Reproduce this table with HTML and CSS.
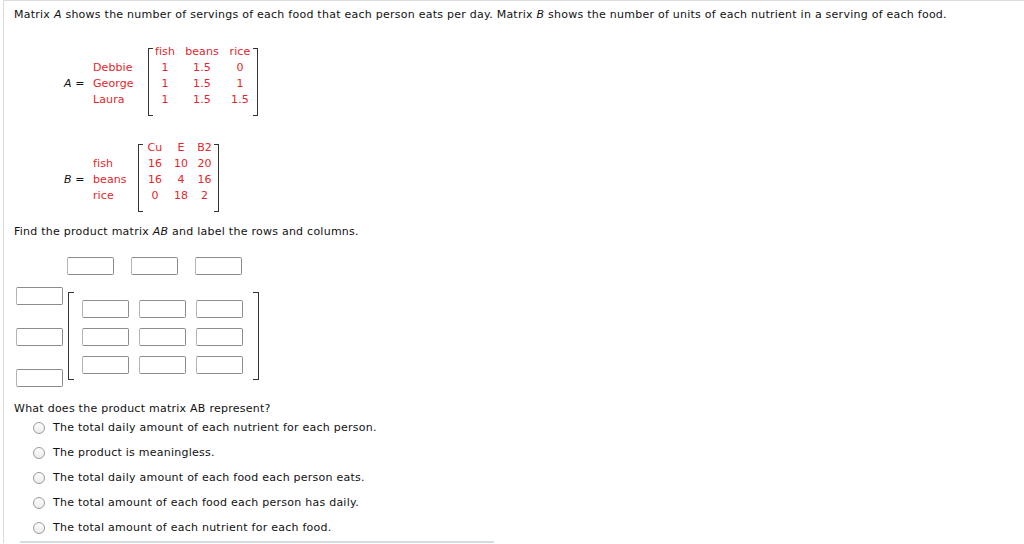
FILE: index.html
```html
<!DOCTYPE html>
<html>
<head>
<meta charset="utf-8">
<link rel="stylesheet" href="styles.css">
</head>
<body>
<div class="page">
  <p class="intro">Matrix <i>A</i> shows the number of servings of each food that each person eats per day. Matrix <i>B</i> shows the number of units of each nutrient in a serving of each food.</p>

  <div class="mat mat-a">
    <div class="eq"><i>A</i> =</div>
    <div class="lbl r1">Debbie</div>
    <div class="lbl r2">George</div>
    <div class="lbl r3">Laura</div>
    <div class="brk brk-l"></div>
    <div class="c c1 r0">fish</div><div class="c c2 r0">beans</div><div class="c c3 r0">rice</div>
    <div class="c c1 r1">1</div><div class="c c2 r1">1.5</div><div class="c c3 r1">0</div>
    <div class="c c1 r2">1</div><div class="c c2 r2">1.5</div><div class="c c3 r2">1</div>
    <div class="c c1 r3">1</div><div class="c c2 r3">1.5</div><div class="c c3 r3">1.5</div>
    <div class="brk brk-r"></div>
  </div>

  <div class="mat mat-b">
    <div class="eq"><i>B</i> =</div>
    <div class="lbl r1">fish</div>
    <div class="lbl r2">beans</div>
    <div class="lbl r3">rice</div>
    <div class="brk brk-l"></div>
    <div class="c c1 r0">Cu</div><div class="c c2 r0">E</div><div class="c c3 r0">B2</div>
    <div class="c c1 r1">16</div><div class="c c2 r1">10</div><div class="c c3 r1">20</div>
    <div class="c c1 r2">16</div><div class="c c2 r2">4</div><div class="c c3 r2">16</div>
    <div class="c c1 r3">0</div><div class="c c2 r3">18</div><div class="c c3 r3">2</div>
    <div class="brk brk-r"></div>
  </div>

  <p class="find">Find the product matrix <i>AB</i> and label the rows and columns.</p>

  <div class="answer">
    <div class="colheads">
      <input class="box" type="text"><input class="box" type="text"><input class="box" type="text">
    </div>
    <div class="answer-body">
      <div class="rowheads">
        <input class="box" type="text"><input class="box" type="text"><input class="box" type="text">
      </div>
      <div class="bigmat">
        <div class="bbrk bbrk-l"></div>
        <div class="cells">
          <input class="box" type="text"><input class="box" type="text"><input class="box" type="text">
          <input class="box" type="text"><input class="box" type="text"><input class="box" type="text">
          <input class="box" type="text"><input class="box" type="text"><input class="box" type="text">
        </div>
        <div class="bbrk bbrk-r"></div>
      </div>
    </div>
  </div>

  <p class="q">What does the product matrix AB represent?</p>
  <ul class="opts">
    <li><span class="radio"></span>The total daily amount of each nutrient for each person.</li>
    <li><span class="radio"></span>The product is meaningless.</li>
    <li><span class="radio"></span>The total daily amount of each food each person eats.</li>
    <li><span class="radio"></span>The total amount of each food each person has daily.</li>
    <li><span class="radio"></span>The total amount of each nutrient for each food.</li>
  </ul>
  <div class="rule"></div>
</div>
</body>
</html>
```

FILE: styles.css
```css
html, body {
  margin: 0;
  padding: 0;
  background: #fff;
}
body {
  font-family: Verdana, "DejaVu Sans", sans-serif;
  font-size: 11px;
  letter-spacing: 0.25px;
  color: #111;
  overflow: hidden;
}
.page {
  margin-left: 3px;
  border-left: 1px solid #dcdcdc;
  border-top: 1px solid #dcdcdc;
  padding: 6px 0 0 10px;
}
p { margin: 0; line-height: 16px; }

.mat {
  display: grid;
  margin-left: 50px;
  grid-template-rows: 16px 16px 16px 16px 8px;
  line-height: 16px;
  letter-spacing: 0.1px;
}
.mat-a {
  margin-top: 21px;
  grid-template-columns: 29px 55px 5px 24px 50px 26px 5px;
}
.mat-b {
  margin-top: 24px;
  grid-template-columns: 29px 45px 5px 24px 28px 19px 5px;
}
.eq { grid-column: 1; grid-row: 3; color: #111; }
.lbl { grid-column: 2; color: #e3262a; }
.c { text-align: center; color: #e3262a; }
.r0 { grid-row: 1; }
.r1 { grid-row: 2; }
.r2 { grid-row: 3; }
.r3 { grid-row: 4; }
.c1 { grid-column: 4; }
.c2 { grid-column: 5; }
.c3 { grid-column: 6; }
.brk {
  grid-row: 1 / 6;
  margin-top: 4px;
  border-top: 1px solid #333;
  border-bottom: 1px solid #333;
}
.brk-l { grid-column: 3; border-left: 1px solid #333; }
.brk-r { grid-column: 7; border-right: 1px solid #333; }

.find { margin-top: 12px; }

.box {
  display: block;
  width: 47px;
  height: 18px;
  box-sizing: border-box;
  margin: 0;
  padding: 0;
  border: 1px solid #8c8c8c;
  border-left-color: #b4b4b4;
  border-radius: 2px;
  background: #fff;
}
.answer { margin-top: 17px; }
.colheads {
  display: flex;
  gap: 17px;
  margin-left: 53px;
}
.answer-body {
  display: flex;
  align-items: flex-start;
  margin-top: 12px;
}
.rowheads {
  display: flex;
  flex-direction: column;
  gap: 23px;
  margin-left: 2px;
}
.bigmat {
  display: flex;
  margin-left: 5px;
  margin-top: 5px;
  height: 88px;
}
.bbrk {
  width: 5px;
  border-top: 1px solid #333;
  border-bottom: 1px solid #333;
}
.bbrk-l { border-left: 1px solid #333; }
.bbrk-r { border-right: 1px solid #333; }
.cells {
  display: grid;
  grid-template-columns: repeat(3, 47px);
  grid-auto-rows: 18px;
  column-gap: 10px;
  row-gap: 10px;
  padding: 8px 10px 0 8px;
}

.q { margin-top: 14px; }
.opts {
  list-style: none;
  margin: -2px 0 0 0;
  padding: 0 0 0 19px;
}
.opts li {
  display: flex;
  align-items: center;
  height: 25px;
}
.radio {
  width: 10px;
  height: 10px;
  border: 1px solid #9a9a9a;
  border-radius: 50%;
  background: linear-gradient(#fdfdfd, #ececec);
  margin-right: 8px;
  flex: none;
}
.rule {
  margin: 1px 0 0 6px;
  width: 474px;
  border-top: 2px solid #d3dbe4;
}
```
